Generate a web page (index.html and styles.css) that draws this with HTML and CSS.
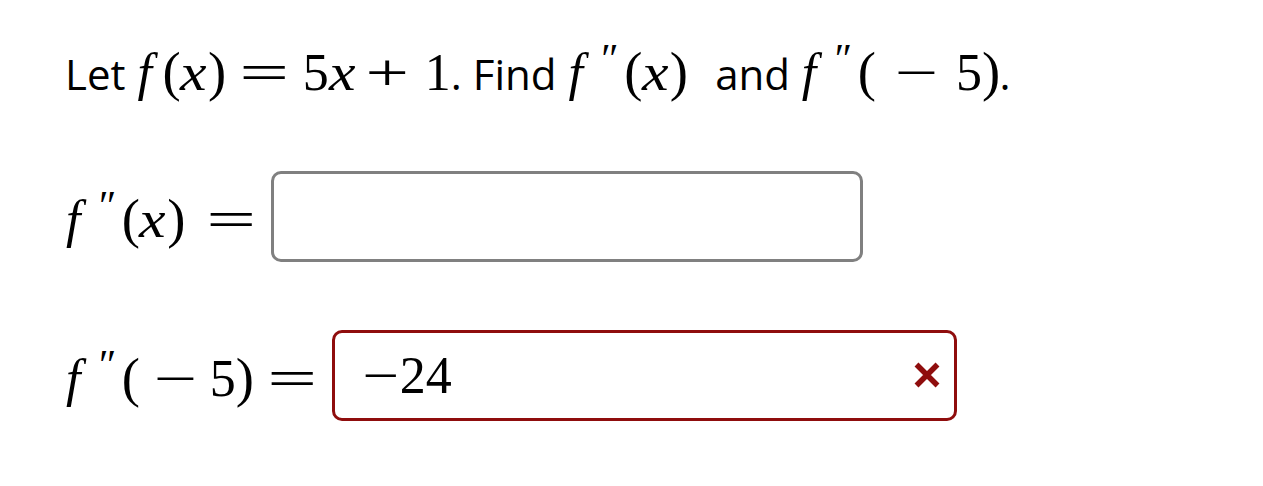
FILE: index.html
```html
<!DOCTYPE html>
<html>
<head>
<meta charset="utf-8">
<link rel="stylesheet" href="styles.css">
</head>
<body>
<div class="page">
  <p class="question">Let <span class="m"><i class="mf">f</i><span class="ps">(</span><i class="mx">x</i><span class="ps">)</span><span class="rel">=</span><span class="dg">5</span><i class="mx">x</i><span class="bin">+</span><span class="dg">1</span></span>. Find <span class="m m-gap"><i class="mf">f</i><span class="pr">″</span><span class="ps">(</span><i class="mx">x</i><span class="ps">)</span></span> and <span class="m"><i class="mf">f</i><span class="pr">″</span><span class="ps">(</span><span class="bin minus">−</span><span class="dg">5</span><span class="ps">)</span></span>.</p>
  <div class="row">
    <span class="m label"><i class="mf">f</i><span class="pr">″</span><span class="ps">(</span><i class="mx">x</i><span class="ps">)</span><span class="rel rel-wide">=</span></span>
    <div class="box box-a"></div>
  </div>
  <div class="row">
    <span class="m label"><i class="mf">f</i><span class="pr">″</span><span class="ps">(</span><span class="bin minus">−</span><span class="dg">5</span><span class="ps">)</span><span class="rel">=</span></span>
    <div class="box box-b"><span class="m val"><span class="neg">−</span>24</span>
      <svg class="xmark" width="28" height="28" viewBox="0 0 28 28"><path d="M3.5 3.5L24.5 24.5M24.5 3.5L3.5 24.5" stroke="#8f0d0d" stroke-width="5.5" fill="none"/></svg>
    </div>
  </div>
</div>
</body>
</html>
```
FILE: styles.css
```css
html, body { margin: 0; padding: 0; background: #fff; }
body { font-family: "Open Sans", "Noto Sans", sans-serif; color: #000; }
.page { padding: 24px 0 0 65px; }
.question { margin: 0; font-size: 42px; line-height: 70px; white-space: nowrap; }
.m { font-family: "Liberation Serif", serif; font-size: 52px; white-space: nowrap; }
.m-gap { margin-right: 17px; }
.m i { font-style: italic; }
.m > span, .m > i { display: inline-block; text-align: center; }
.m > .mf { width: 0.5em; text-align: left; padding-left: 1px; box-sizing: border-box; }
.m > .mx { width: 0.54em; text-align: left; transform: scaleX(1.15); transform-origin: left center; }
.ps { width: 0.32em; font-size: 1.05em; }
.dg { width: 0.5em; }
.rel { width: 0.778em; margin: 0 0.35em 0 0.36em; transform: scaleX(1.7); }
.label .rel { margin-right: 0; }
.label .rel-wide { margin-left: 0.5em; }
.bin { width: 0.778em; margin: 0 0.34em 0 0.19em; transform: scaleX(1.48); }
.bin.minus { transform: scaleX(1.48); }
.question .minus { margin: 0 0.38em 0 0.4em; }
.label .minus { margin: 0 0.28em 0 0.3em; }
.m > .pr { width: 0.74em; font-size: 0.8em; vertical-align: 0.4em; text-align: left; padding-left: 0.19em; box-sizing: border-box; }
.row { display: flex; align-items: center; margin-top: 62px; }
.row + .row { margin-top: 68px; }
.label { white-space: nowrap; }
.box { box-sizing: border-box; height: 91px; border-radius: 10px; display: flex; align-items: center; }
.box-a { width: 592px; margin-left: 20px; border: 3px solid #808080; }
.box-b { width: 625px; margin-left: 20px; border: 3px solid #8f0d0d; padding: 0 13px 0 31px; justify-content: space-between; }
.val { font-size: 52px; }
.neg { display: inline-block; transform: scaleX(1.25); margin-right: 4px; }
.xmark { display: block; }
```
